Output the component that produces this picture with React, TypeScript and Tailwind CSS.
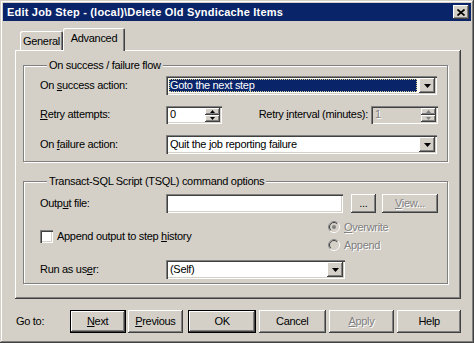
const raised = "shadow-[inset_-1px_-1px_0_#404040,inset_1px_1px_0_#fff,inset_-2px_-2px_0_#808080]";
const sunken = "shadow-[inset_1px_1px_0_#808080,inset_2px_2px_0_#404040,inset_-1px_-1px_0_#fff,inset_-2px_-2px_0_#d4d0c8]";
const etched = "border border-[#808080] shadow-[inset_1px_1px_0_#fff,1px_1px_0_#fff]";
const dis = "text-[#808080] [text-shadow:1px_1px_0_#fff]";

function Arrow({ gray }: { gray?: boolean }) {
  return (
    <svg width="7" height="4" viewBox="0 0 7 4">
      <polygon points="0,0 7,0 3.5,4" fill={gray ? "#808080" : "#000"} />
    </svg>
  );
}

function Combo({ value, width, selected }: { value: string; width: string; selected?: boolean }) {
  return (
    <div className={`flex h-[19px] items-center bg-white p-[2px] ${sunken} ${width}`}>
      <div className="flex h-full min-w-0 flex-1 items-center pl-[1px] pr-[2px]">
        {selected ? (
          <div className="flex h-[13px] w-full items-center bg-[#0a246a] pl-[1px] text-white outline-1 -outline-offset-1 outline-dotted outline-[#d8d08c]">
            {value}
          </div>
        ) : (
          <span className="pl-[1px]">{value}</span>
        )}
      </div>
      <div className={`flex h-[15px] w-[16px] items-center justify-center bg-[#d4d0c8] ${raised}`}>
        <Arrow />
      </div>
    </div>
  );
}

function Spin({ value, width, disabled }: { value: string; width: string; disabled?: boolean }) {
  const c = disabled ? "#808080" : "#000";
  return (
    <div className={`flex h-[18px] items-center p-[2px] ${disabled ? "bg-[#d4d0c8]" : "bg-white"} ${sunken} ${width}`}>
      <span className={`flex-1 pl-[2px] ${disabled ? dis : ""}`}>{value}</span>
      <div className="flex h-full w-[15px] flex-col">
        <div className={`flex flex-1 items-center justify-center bg-[#d4d0c8] ${raised}`}>
          <svg width="5" height="3" viewBox="0 0 5 3"><polygon points="2.5,0 5,3 0,3" fill={c} /></svg>
        </div>
        <div className={`flex flex-1 items-center justify-center bg-[#d4d0c8] ${raised}`}>
          <svg width="5" height="3" viewBox="0 0 5 3"><polygon points="0,0 5,0 2.5,3" fill={c} /></svg>
        </div>
      </div>
    </div>
  );
}

function Btn({ children, width, def, disabled, h = "h-[23px]" }: { children: React.ReactNode; width: string; def?: boolean; disabled?: boolean; h?: string }) {
  return (
    <div className={`${h} ${width} ${def ? "border border-black" : ""} bg-[#d4d0c8]`}>
      <div className={`flex h-full w-full items-center justify-center ${raised} ${disabled ? dis : ""}`}>{children}</div>
    </div>
  );
}

function Radio({ checked }: { checked?: boolean }) {
  return (
    <svg width="12" height="12" viewBox="0 0 12 12">
      <circle cx="6" cy="6" r="5.5" fill="#d4d0c8" stroke="#fff" />
      <path d="M2.1 9.9A5.5 5.5 0 0 1 9.9 2.1" fill="none" stroke="#808080" />
      <circle cx="6" cy="6" r="4.5" fill="none" stroke="#d4d0c8" />
      <path d="M2.8 9.2A4.5 4.5 0 0 1 9.2 2.8" fill="none" stroke="#404040" />
      {checked && <circle cx="6" cy="6" r="2" fill="#808080" />}
    </svg>
  );
}

function Label({ children, className = "" }: { children: React.ReactNode; className?: string }) {
  return <span className={`w-[126px] shrink-0 ${className}`}>{children}</span>;
}

export default function App() {
  return (
    <div className="h-[343px] w-[474px] bg-[#d4d0c8] p-[3px] font-['Liberation_Sans',Arial,sans-serif] text-[11px] leading-[13px] tracking-[-0.3px] text-black shadow-[inset_-1px_-1px_0_#404040,inset_1px_1px_0_#d4d0c8,inset_-2px_-2px_0_#808080,inset_2px_2px_0_#fff]">
      <div className="flex h-[18px] items-center justify-between bg-[#0a246a] pl-[4px] pr-[2px]">
        <span className="text-[11px] font-bold tracking-[0.2px] text-white">Edit Job Step - (local)\Delete Old Syndicache Items</span>
        <div className={`flex h-[14px] w-[16px] items-center justify-center bg-[#d4d0c8] ${raised}`}>
          <svg width="8" height="7" viewBox="0 0 8 7">
            <path d="M0.5 0.5L7.5 6.5M7.5 0.5L0.5 6.5" stroke="#000" strokeWidth="1.7" />
          </svg>
        </div>
      </div>

      <div className="flex flex-col pl-[12px] pr-[10px]">
        <div className="mt-[7px] flex h-[22px] items-end pl-[5px]">
          <div className="flex h-[19px] w-[43px] items-start justify-center rounded-t-[2px] pt-[4px] shadow-[inset_1px_1px_0_#fff,inset_-1px_0_0_#404040,inset_-2px_0_0_#808080]">
            General
          </div>
          <div className="relative z-10 -mb-[1px] flex h-[23px] w-[62px] items-start justify-center rounded-t-[2px] bg-[#d4d0c8] pt-[4px] shadow-[inset_1px_1px_0_#fff,inset_-1px_0_0_#404040,inset_-2px_0_0_#808080]">
            Advanced
          </div>
        </div>

        <div className={`flex h-[249px] flex-col pl-[8px] pr-[13px] pt-[9px] ${raised}`}>
          <fieldset className={`flex flex-col pl-[16px] pr-[9px] pb-[7px] ${etched}`}>
            <legend className="ml-[7px] bg-[#d4d0c8] px-[2px]">On success / failure flow</legend>
            <div className="mt-[4px] flex h-[19px] items-center">
              <Label>On <u>s</u>uccess action:</Label>
              <Combo value="Goto the next step" width="w-[271px]" selected />
            </div>
            <div className="mt-[10px] flex h-[19px] items-center">
              <Label><u>R</u>etry attempts:</Label>
              <Spin value="0" width="w-[56px]" />
              <span className="ml-auto mr-[3px]">Retry <u>i</u>nterval (minutes):</span>
              <Spin value="1" width="w-[67px]" disabled />
            </div>
            <div className="mt-[11px] flex h-[19px] items-center">
              <Label>On <u>f</u>ailure action:</Label>
              <Combo value="Quit the job reporting failure" width="w-[271px]" />
            </div>
          </fieldset>

          <fieldset className={`mt-[13px] flex flex-col pl-[16px] pr-[9px] pb-[4px] ${etched}`}>
            <legend className="ml-[7px] bg-[#d4d0c8] px-[2px]">Transact-SQL Script (TSQL) command options</legend>
            <div className="mt-[6px] flex h-[19px] items-center">
              <Label>Outp<u>u</u>t file:</Label>
              <div className={`h-[19px] w-[177px] bg-white ${sunken}`} />
              <Btn width="ml-[8px] w-[25px]" h="h-[19px]">...</Btn>
              <Btn width="ml-[6px] w-[56px]" h="h-[19px]" disabled><span><u>V</u>iew...</span></Btn>
            </div>
            <div className="mt-[5px] flex h-[36px] items-center">
              <div className="flex flex-1 items-center">
                <div className={`h-[13px] w-[13px] bg-white ${sunken}`} />
                <span className="ml-[4px]">Append output to step <u>h</u>istory</span>
              </div>
              <div className="flex w-[110px] flex-col gap-[6px]">
                <div className="flex h-[12px] items-center gap-[4px]">
                  <Radio checked />
                  <span className={dis}><u>O</u>verwrite</span>
                </div>
                <div className="flex h-[12px] items-center gap-[4px]">
                  <Radio />
                  <span className={dis}>Append</span>
                </div>
              </div>
            </div>
            <div className="mt-[6px] flex h-[19px] items-center">
              <Label>Run as us<u>e</u>r:</Label>
              <Combo value="(Self)" width="w-[179px]" />
            </div>
          </fieldset>
        </div>

        <div className="mt-[11px] flex h-[23px] items-center">
          <span className="w-[55px] pl-[1px]">Go to:</span>
          <Btn width="w-[56px]" def><span><u>N</u>ext</span></Btn>
          <Btn width="ml-[2px] w-[56px]"><span><u>P</u>revious</span></Btn>
          <Btn width="ml-[5px] w-[68px]" def>OK</Btn>
          <Btn width="ml-[3px] w-[67px]">Cancel</Btn>
          <Btn width="ml-[3px] w-[66px]" disabled><span><u>A</u>pply</span></Btn>
          <Btn width="ml-[3px] w-[64px]">Help</Btn>
        </div>
      </div>
    </div>
  );
}
